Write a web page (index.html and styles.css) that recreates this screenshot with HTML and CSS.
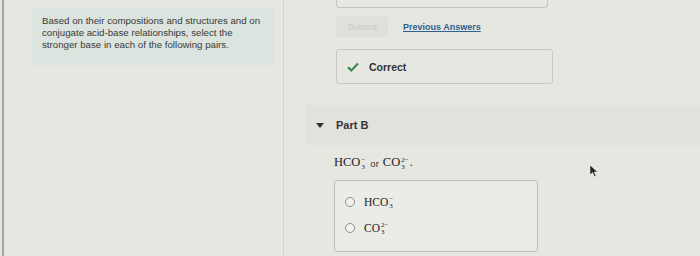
FILE: index.html
```html
<!DOCTYPE html>
<html lang="en">
<head>
    <meta charset="UTF-8">
    <meta name="viewport" content="width=device-width, initial-scale=1.0">
    <title>Part B</title>
    <link rel="stylesheet" href="styles.css">
</head>
<body>
    <div class="page">
        <div class="intro">
            <div class="intro-box">
                Based on their compositions and structures and on<br>
                conjugate acid-base relationships, select the<br>
                stronger base in each of the following pairs.
            </div>
        </div>

        <div class="main">
            <div class="indent">
                <div class="prev-box"></div>
                <div class="actions">
                    <button class="submit-button" disabled>Submit</button>
                    <a class="prev-link" href="#">Previous Answers</a>
                </div>
                <div class="feedback">
                    <svg class="check" width="12" height="10" viewBox="0 0 12 10">
                        <path d="M1 5.2 L4.3 8.4 L11 1.4" fill="none" stroke="#3d8a4e" stroke-width="2.2"/>
                    </svg>
                    <span class="feedback-text">Correct</span>
                </div>
            </div>

            <div class="part-header">
                <span class="caret"></span>
                <span class="part-title">Part B</span>
            </div>

            <div class="indent">
                <div class="question">
                    <span class="chem">HCO<span class="ion"><sup>&minus;</sup><sub>3</sub></span></span>
                    <span class="or">or</span>
                    <span class="chem">CO<span class="ion"><sup>2&minus;</sup><sub>3</sub></span></span><span class="dot">.</span>
                </div>

                <div class="choices">
                    <label class="choice">
                        <span class="radio"></span>
                        <span class="chem small">HCO<span class="ion"><sup>&minus;</sup><sub>3</sub></span></span>
                    </label>
                    <label class="choice">
                        <span class="radio"></span>
                        <span class="chem small">CO<span class="ion"><sup>2&minus;</sup><sub>3</sub></span></span>
                    </label>
                </div>
            </div>
        </div>
    </div>

    <svg class="pointer" width="10" height="14" viewBox="0 0 10 14">
        <path d="M1 1 L1 11 L3.6 8.6 L5.4 12.6 L7 11.9 L5.3 8 L8.6 8 Z" fill="#222" stroke="#eee" stroke-width="0.6"/>
    </svg>
</body>
</html>
```

FILE: styles.css
```css
body {
    margin: 0;
    background-color: #e7e7e2;
    font-family: "Liberation Sans", Arial, sans-serif;
    color: #333;
    overflow: hidden;
}
.page {
    display: flex;
    height: 256px;
}
.intro {
    width: 282px;
    margin-left: 2px;
    border-left: 2px solid #a4a4a0;
    border-right: 1px solid #d2d2ce;
    padding-top: 8px;
    box-sizing: border-box;
}
.intro-box {
    margin-left: 28px;
    width: 242px;
    height: 57px;
    box-sizing: border-box;
    padding: 7px 10px;
    background-color: #dbe4de;
    font-size: 9.7px;
    line-height: 12px;
    color: #3a3a3a;
}
.main {
    flex: 1;
    padding-left: 21px;
}
.indent {
    padding-left: 31px;
}
.prev-box {
    width: 210px;
    height: 7px;
    border: 1px solid #c4c4c0;
    border-top: none;
    border-radius: 0 0 4px 4px;
}
.actions {
    display: flex;
    align-items: center;
    margin-top: 8px;
    height: 21px;
}
.submit-button {
    width: 52px;
    height: 21px;
    border: none;
    border-radius: 2px;
    background-color: #dfdfdb;
    color: #cacac6;
    font-family: inherit;
    font-size: 9.5px;
    padding: 0;
}
.prev-link {
    margin-left: 15px;
    font-size: 9px;
    font-weight: bold;
    color: #2f5f8e;
    text-decoration: underline;
}
.feedback {
    display: flex;
    align-items: center;
    margin-top: 12px;
    width: 217px;
    height: 35px;
    box-sizing: border-box;
    border: 1px solid #c8c8c4;
    border-radius: 3px;
    padding-left: 10px;
}
.check {
    margin-right: 10px;
}
.feedback-text {
    font-size: 10.5px;
    font-weight: bold;
    color: #333;
}
.part-header {
    display: flex;
    align-items: center;
    margin-top: 21px;
    height: 40px;
    padding-left: 11px;
    background-color: #e2e2dd;
}
.caret {
    width: 0;
    height: 0;
    border-left: 4px solid transparent;
    border-right: 4px solid transparent;
    border-top: 5px solid #333;
    margin-right: 12px;
}
.part-title {
    font-size: 11px;
    font-weight: bold;
    color: #333;
}
.question {
    display: flex;
    align-items: center;
    height: 35px;
    margin-left: -2px;
}
.chem {
    display: inline-flex;
    align-items: center;
    font-family: "Liberation Serif", "Times New Roman", serif;
    font-size: 12.5px;
    color: #222;
}
.chem.small {
    font-size: 11.5px;
}
.ion {
    display: inline-flex;
    flex-direction: column;
    margin-left: 1px;
    margin-top: 2px;
    font-size: 7px;
    line-height: 8px;
}
.ion sup,
.ion sub {
    display: block;
    height: 7px;
    line-height: 7px;
    overflow: hidden;
    vertical-align: baseline;
    font-size: inherit;
}
.or {
    font-size: 9.5px;
    margin: 2px 4px 0 5px;
    color: #333;
}
.dot {
    font-family: "Liberation Serif", serif;
    font-size: 12px;
    margin-left: 1px;
}
.choices {
    width: 204px;
    height: 72px;
    box-sizing: border-box;
    border: 1px solid #bcbcb8;
    border-radius: 3px;
    background-color: #ebebe7;
    padding: 13px 0 0 10px;
    margin-left: -2px;
}
.choice {
    display: flex;
    align-items: center;
    height: 16px;
    margin-bottom: 10px;
}
.radio {
    width: 8px;
    height: 8px;
    border: 1px solid #8c8c88;
    border-radius: 50%;
    background-color: #f2f2ee;
    margin-right: 9px;
}
.pointer {
    position: absolute;
    left: 589px;
    top: 164px;
}
```
